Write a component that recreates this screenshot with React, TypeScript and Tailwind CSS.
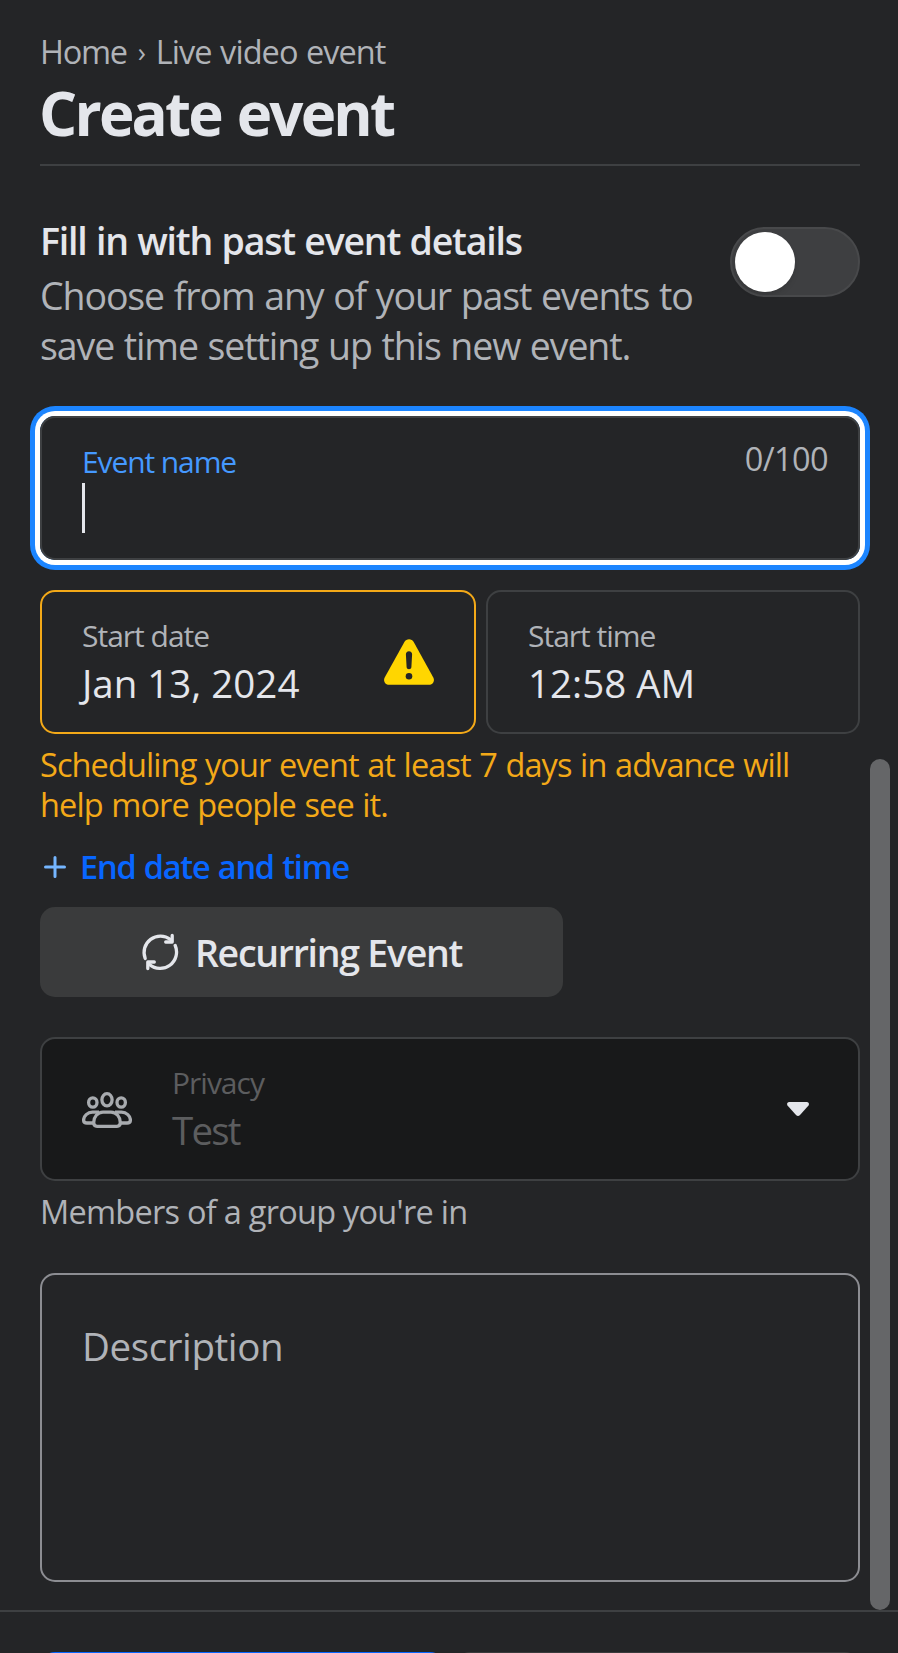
import { useState } from 'react';

interface FieldProps {
    label: string;
    value: string;
    className?: string;
    children?: React.ReactNode;
}

const WarningIcon = () => (
    <svg width="50" height="46" viewBox="0 0 50 46" className="shrink-0 -mt-px">
        <path
            d="M20.400 2.900a5.400 5.400 0 0 1 9.300 0L49.300 38.400c1.800 3.500-.5 7.300-4.400 7.300H5.100c-3.900 0-6.200-3.800-4.400-7.300Z"
            fill="#ffd600"
        />
        <path d="M25 12.200c2 0 3.200 1.500 3.100 3.300l-.7 12.400c-.1 3-4.700 3-4.800 0l-.7-12.400c-.1-1.800 1.100-3.300 3.100-3.300Z" fill="#242527" />
        <circle cx="25" cy="37.200" r="3.300" fill="#242527" />
    </svg>
);

const RecurringIcon = () => (
    <svg width="38" height="38" viewBox="0 0 38 38" fill="none" stroke="#e4e6eb" strokeWidth="3.300" strokeLinecap="round" strokeLinejoin="round">
        <path d="M4.200 25.500A16.400 16.400 0 0 1 29.500 6.500" />
        <path d="M31.200 2.500v6.500h-6.500" />
        <path d="M34.200 12.500A16.400 16.400 0 0 1 8.500 31.500" />
        <path d="M6.800 35.600v-6.600h6.500" />
    </svg>
);

const GroupIcon = () => (
    <svg width="50" height="36" viewBox="0 0 50 36" fill="none" stroke="#a8abaf" strokeWidth="3.300" strokeLinejoin="round" className="mt-0.5">
        <ellipse cx="25" cy="7.800" rx="5.100" ry="6.100" />
        <ellipse cx="10.800" cy="10.500" rx="4.200" ry="4.700" />
        <ellipse cx="39.200" cy="10.500" rx="4.200" ry="4.700" />
        <path d="M21 20.200h8c5.500 0 9.300 4.800 9.300 10.300 0 2.500-1 3.800-3.300 3.800H15c-2.300 0-3.300-1.300-3.300-3.800 0-5.500 3.800-10.300 9.300-10.300Z" />
        <path d="M17 20.200H10.500c-5 0-8.900 3.800-8.900 7.800 0 2 1 3 3.300 3h6.500" />
        <path d="M33 20.200h6.500c5 0 8.900 3.800 8.900 7.800 0 2-1 3-3.300 3h-6.500" />
    </svg>
);

const Field: React.FC<FieldProps> = ({ label, value, className = '', children }) => (
    <div className={`flex items-center h-36 border-2 rounded-[15px] pl-10 ${className}`}>
        <div className="grow pt-0.5">
            <div className="mb-1 text-[30px] leading-9 tracking-[-1px] text-[#b0b3b8]">{label}</div>
            <div className="text-[38.500px] leading-[50px] text-[#e4e6eb]">{value}</div>
        </div>
        {children}
    </div>
);

const CreateEventForm = () => {
    const [usePast, setUsePast] = useState(false);

    return (
        <div className="px-10 w-[900px]">
            <nav className="flex items-center pt-8 h-[73px] text-[32.500px] text-[#b0b3b8] whitespace-nowrap">
                <span className="tracking-[-1.300px]">Home</span>
                <span className="ml-[11px] mr-[10px] text-[27px]">›</span>
                <span className="tracking-[-0.950px] [word-spacing:1px]">Live video event</span>
            </nav>
            <h1 className="h-[91px] -ml-px text-[60px] leading-[80px] font-bold tracking-[-2.800px] [word-spacing:3px] text-[#e4e6eb]">
                Create event
            </h1>
            <div className="w-[820px] border-t-2 border-[#3e4042]" />

            <div className="flex justify-between w-[820px] pt-12 h-[250px]">
                <div className="whitespace-nowrap text-[37.500px]">
                    <div className="mb-[3px] leading-[54px] font-semibold tracking-[-1.230px] [word-spacing:1px] text-[#e4e6eb]">
                        Fill in with past event details
                    </div>
                    <p className="leading-[50px] tracking-[-1.100px] [word-spacing:1px] text-[#b0b3b8]">
                        Choose from any of your past events to
                        <br />
                        save time setting up this new event.
                    </p>
                </div>
                <button
                    onClick={() => setUsePast(!usePast)}
                    className="flex items-center mt-[13px] w-[130px] h-[70px] px-[3px] rounded-full border-2 border-[#48494b] bg-[#3e3f41]"
                >
                    <span className={`size-[60px] rounded-full bg-white shadow-md ${usePast ? 'ml-auto' : ''}`} />
                </button>
            </div>

            <div className="flex h-36 w-[820px] rounded-[15px] border-2 border-[#3e4042] shadow-[0_0_0_5px_#fff,0_0_0_10px_#1c85ff] pl-10 pr-[30px]">
                <div className="grow pt-6">
                    <div className="mb-px text-[30px] leading-10 tracking-[-1.100px] text-[#4599ff]">Event name</div>
                    <div className="w-[3px] h-[50px] bg-[#e4e6eb]" />
                </div>
                <span className="pt-[21px] text-[32.500px] leading-10 tracking-[-0.600px] text-[#b0b3b8]">0/100</span>
            </div>

            <div className="flex gap-2.5 mt-[30px] w-[820px]">
                <Field label="Start date" value="Jan 13, 2024" className="w-[436px] pr-10 border-[#f3a918]">
                    <WarningIcon />
                </Field>
                <Field label="Start time" value="12:58 AM" className="grow border-[#3e4042]" />
            </div>
            <p className="mt-[11px] h-[81px] text-[32.500px] leading-10 tracking-[-0.900px] [word-spacing:1px] text-[#f3a918] whitespace-nowrap">
                Scheduling your event at least 7 days in advance will
                <br />
                help more people see it.
            </p>

            <a className="flex items-center mt-5 h-[46px] text-[32.500px] font-semibold tracking-[-1.200px] [word-spacing:1px] text-[#0866ff]">
                <svg width="30" height="30" viewBox="0 0 30 30" className="-mt-1 mr-2.5" stroke="#75b6ff" strokeWidth="3" strokeLinecap="round">
                    <path d="M15 5.500v19M5.500 15h19" />
                </svg>
                <span className="-mt-1">End date and time</span>
            </a>

            <button className="flex items-center justify-center gap-4 mt-[15px] w-[523px] h-[90px] rounded-[15px] bg-[#3a3b3c] text-[37.500px] font-semibold tracking-[-1.280px] text-[#e4e6eb]">
                <RecurringIcon />
                <span className="mt-0.5">Recurring Event</span>
            </button>

            <div className="flex mt-10 w-[820px] h-36 items-center rounded-[15px] border-2 border-[#3e4042] bg-[#18191a] pl-10 pr-12">
                <GroupIcon />
                <div className="grow pl-10 pt-0.5">
                    <div className="mb-1 text-[30px] leading-9 tracking-[-1px] text-[#5c5d5f]">Privacy</div>
                    <div className="text-[38.500px] leading-[50px] tracking-[-1.800px] text-[#5c5d5f]">Test</div>
                </div>
                <svg width="24" height="16" viewBox="0 0 24 16">
                    <path d="M3 1h18q3 1 1.500 3.500L14 14q-2 2-4 0L1.500 4.500Q0 2 3 1Z" fill="#e4e6eb" />
                </svg>
            </div>
            <p className="mt-[11px] h-[81px] text-[32.500px] leading-10 tracking-[-0.740px] text-[#b0b3b8]">Members of a group you're in</p>

            <div className="w-[820px] h-[309px] rounded-[15px] border-2 border-[#8c8d92] pl-10 pt-11 text-[38.500px] leading-[54px] tracking-[-0.400px] text-[#b0b3b8]">
                Description
            </div>
        </div>
    );
};

export default function App() {
    return (
        <div className="relative w-full h-[1653px] overflow-hidden bg-[#242527] font-['Open_Sans',sans-serif]">
            <CreateEventForm />
            <div className="absolute left-[870px] top-[759px] w-5 h-[851px] rounded-full bg-[#656668]" />
            <footer className="flex gap-2.5 mt-7 px-10 pt-10 w-[900px] h-[43px] border-t-2 border-[#3e4042]">
                <button className="w-[405px] h-[90px] shrink-0 rounded-[15px] bg-[#0866ff]" />
                <button className="w-[405px] h-[90px] shrink-0 rounded-[15px] bg-[#3a3b3c]" />
            </footer>
        </div>
    );
}
